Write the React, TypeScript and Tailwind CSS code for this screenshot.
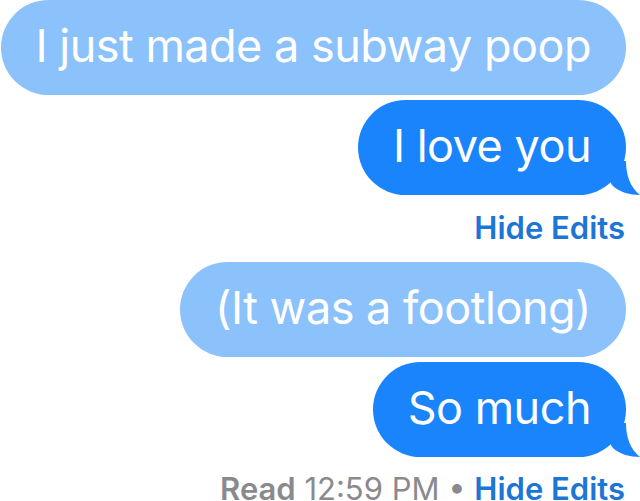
import React from "react";

function Tail({ color }: { color: string }) {
  return (
    <svg
      className="absolute right-[-14px] bottom-0"
      width="30"
      height="34"
      viewBox="0 0 30 34"
    >
      <path
        d="M0 0 L16 0 C16 14 20 26 30 34 C20 34 10 31 4 26 C2 24 0 22 0 18 Z"
        fill={color}
      />
    </svg>
  );
}

function Bubble({
  text,
  faded,
  className,
}: {
  text: string;
  faded?: boolean;
  className?: string;
}) {
  return (
    <div
      className={
        "relative shrink-0 rounded-[48px] px-[35px] h-[95px] flex items-center text-white text-[45px] leading-none tracking-[-0.5px] " +
        (faded ? "bg-[#8cc2fb] " : "bg-[#1a84fc] ") +
        (className ?? "")
      }
    >
      <span className="pb-[4px]">{text}</span>
      {!faded && <Tail color="#1a84fc" />}
    </div>
  );
}

export default function App() {
  return (
    <div
      className="w-[640px] h-[501px] overflow-hidden bg-white flex flex-col items-end pr-[14px]"
      style={{ fontFamily: "Inter, 'Noto Sans', sans-serif" }}
    >
      <Bubble text="I just made a subway poop" faded className="mt-[0px]" />
      <Bubble text="I love you" className="mt-[5px]" />
      <div className="shrink-0 mt-[12px] mr-[1px] text-[31px] font-semibold text-[#1c76d6] leading-[42px]">
        Hide Edits
      </div>
      <Bubble text="(It was a footlong)" faded className="mt-[13px]" />
      <Bubble text="So much" className="mt-[5px]" />
      <div className="shrink-0 mt-[11px] mr-[1px] text-[31px] leading-[42px] text-[#8a8a8e] whitespace-nowrap">
        <span className="font-semibold">Read</span> 12:59 PM •{" "}
        <span className="font-semibold text-[#1c76d6]">Hide Edits</span>
      </div>
    </div>
  );
}
